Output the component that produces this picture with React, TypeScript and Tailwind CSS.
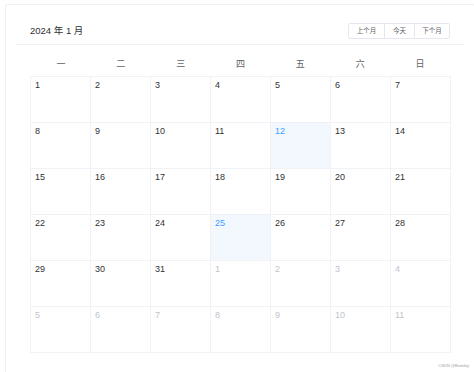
import React from "react";

const weekdays = ["一", "二", "三", "四", "五", "六", "日"];

type Day = { n: number; cur: boolean; active?: boolean };

function buildDays(): Day[] {
  const days: Day[] = [];
  for (let i = 1; i <= 31; i++) {
    days.push({ n: i, cur: true, active: i === 12 || i === 25 });
  }
  for (let i = 1; i <= 11; i++) {
    days.push({ n: i, cur: false });
  }
  return days;
}

export default function App() {
  const days = buildDays();

  return (
    <div
      className="relative w-[474px] h-[372px] overflow-hidden bg-white"
      style={{ fontFamily: '"Liberation Sans", "Noto Sans CJK SC", sans-serif' }}
    >
      <div className="ml-[5px] mt-[4px] w-[470px] h-[400px] border border-[#eef0f4] rounded-[2px] px-[10px] pt-[10px]">
        {/* header */}
        <div className="flex items-center justify-between px-[14px] pt-[8px] pb-[5px] border-b border-[#eef0f4]">
          <div className="text-[9.5px] leading-[16px] text-[#303133]">2024 年 1 月</div>
          <div className="flex h-[16px] border border-[#e4e7ed] rounded-[2px] text-[6.5px] text-[#606266]">
            <button className="w-[35px] flex items-center justify-center">上个月</button>
            <button className="w-[30px] flex items-center justify-center border-l border-[#e4e7ed]">今天</button>
            <button className="w-[35px] flex items-center justify-center border-l border-[#e4e7ed]">下个月</button>
          </div>
        </div>

        {/* body */}
        <div className="px-[14px]">
          <div className="grid grid-cols-7 pl-[1px] pt-[14px] pb-[7px]">
            {weekdays.map((w) => (
              <div key={w} className="text-center text-[9px] leading-[10px] text-[#606266]">
                {w}
              </div>
            ))}
          </div>
          <div className="grid grid-cols-7 w-[421px] border-t border-l border-[#f0f2f5]">
            {days.map((d, i) => (
              <div
                key={i}
                className={
                  "h-[46px] border-r border-b border-[#f0f2f5] pl-[4px] pt-[3px] text-[9px] leading-[10px] " +
                  (d.active
                    ? "bg-[#f2f8fe] text-[#409eff]"
                    : d.cur
                    ? "text-[#303133]"
                    : "text-[#c0c4cc]")
                }
              >
                {d.n}
              </div>
            ))}
          </div>
        </div>
      </div>

      <div className="absolute right-[5px] bottom-[4px] text-[4px] leading-[5px] text-[#9aa0a6]">
        CSDN @Bsmiley
      </div>
    </div>
  );
}
